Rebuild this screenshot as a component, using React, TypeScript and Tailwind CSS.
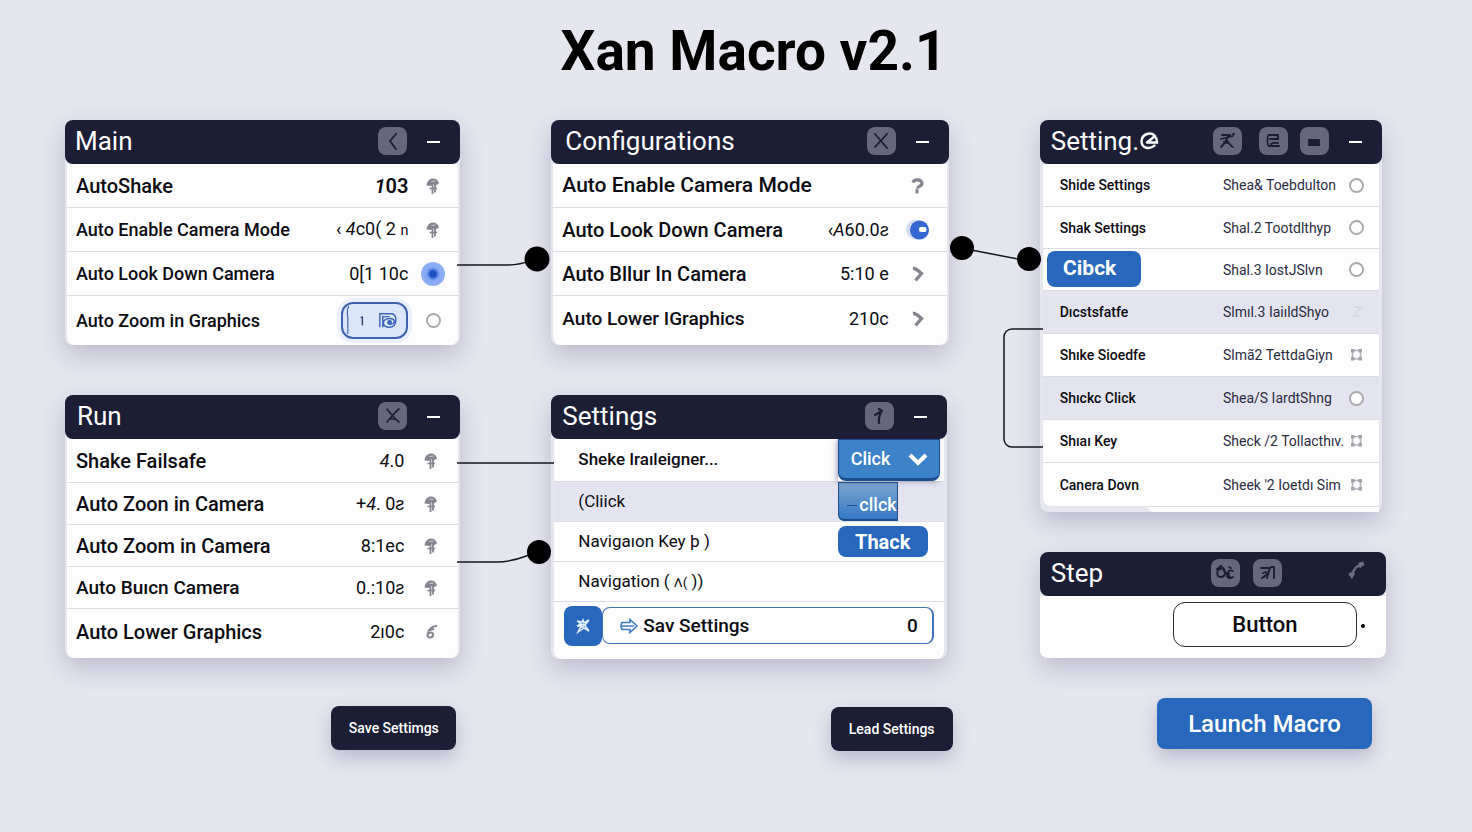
import React from 'react';
import clsx from 'clsx';

type IconName = 'mushroom' | 'hook' | 'question' | 'chevron' | 'square' | 'radio' | 'radioOn' | 'toggle' | 'faint';

interface RowData {
  label: string;
  value?: React.ReactNode;
  icon: IconName;
  size: string;
  height: string;
}

interface ShakeRow {
  label: string;
  value: string;
  icon: IconName;
  height: string;
  button?: boolean;
  shaded?: boolean;
}

const mainRows: RowData[] = [
  { label: 'AutoShake', value: <b className="text-xl font-semibold"><i>1</i>03</b>, icon: 'mushroom', size: 'text-[20px]', height: 'h-[44px]' },
  { label: 'Auto Enable Camera Mode', value: <>‹ <i>4</i>c0( 2 <small>n</small></>, icon: 'mushroom', size: 'text-lg', height: 'h-[44px]' },
  { label: 'Auto Look Down Camera', value: '0[1 10c', icon: 'radioOn', size: 'text-lg', height: 'h-[44px]' },
  { label: 'Auto Zoom in Graphics', value: <ZoomButton />, icon: 'radio', size: 'text-lg', height: 'h-[49px]' },
];

const configRows: RowData[] = [
  { label: 'Auto Enable Camera Mode', icon: 'question', size: 'text-[21px]', height: 'h-[44px]' },
  { label: 'Auto Look Down Camera', value: <>‹<i>A</i>60.0ƨ</>, icon: 'toggle', size: 'text-[20px]', height: 'h-[44px]' },
  { label: 'Auto Bllur In Camera', value: '5:10 e', icon: 'chevron', size: 'text-[20px]', height: 'h-[44px]' },
  { label: 'Auto Lower IGraphics', value: '210c', icon: 'chevron', size: 'text-[19px]', height: 'h-[49px] pb-1' },
];

const runRows: RowData[] = [
  { label: 'Shake Failsafe', value: <><i>4</i>.0</>, icon: 'mushroom', size: 'text-[20px]', height: 'h-[44px]' },
  { label: 'Auto Zoon in Camera', value: <>+<i>4</i>. 0ƨ</>, icon: 'mushroom', size: 'text-[20px]', height: 'h-[42px]' },
  { label: 'Auto Zoom in Camera', value: '8:1ec', icon: 'mushroom', size: 'text-[20px]', height: 'h-[42px]' },
  { label: 'Auto Buıcn Camera', value: '0.:10ƨ', icon: 'mushroom', size: 'text-[19px]', height: 'h-[42px]' },
  { label: 'Auto Lower Graphics', value: '2ı0c', icon: 'hook', size: 'text-[20px]', height: 'h-[49px] pb-1' },
];

const shakeRows: ShakeRow[] = [
  { label: 'Shide Settings', value: 'Shea& Toebdulton', icon: 'radio', height: 'h-[43px]' },
  { label: 'Shak Settings', value: 'Shal.2 Tootdlthyp', icon: 'radio', height: 'h-[42px]' },
  { label: 'Cibck', value: 'Shal.3 IostJSlvn', icon: 'radio', height: 'h-[42px]', button: true },
  { label: 'Dıcstsfatfe', value: 'Slmıl.3 IaiıldShyo', icon: 'faint', height: 'h-[43px]', shaded: true },
  { label: 'Shıke Sioedfe', value: 'Slmã2 TettdaGiyn', icon: 'square', height: 'h-[43px]' },
  { label: 'Shıckc Click', value: 'Shea/S IardtShng', icon: 'radio', height: 'h-[43px]', shaded: true },
  { label: 'Shıaı Key', value: 'Sheck /2 Tollacthıv.', icon: 'square', height: 'h-[43px]' },
  { label: 'Canera Dovn', value: "Sheek '2 Ioetdı Sim", icon: 'square', height: 'h-[43px]' },
];

function RowIcon({ name, label }: { name: IconName; label: string }) {
  if (name === 'radio') {
    return <input type="radio" aria-label={label} className="size-[15px] appearance-none rounded-full border-2 border-[#a9a9ad] bg-white" />;
  }
  if (name === 'radioOn') {
    return (
      <input
        type="radio"
        aria-label={label}
        defaultChecked
        className="size-6 appearance-none rounded-full bg-[radial-gradient(circle,#1d4fc4_0_3px,#5f8ae8_5px,#86a9f3_7px,#8fb0f5_12px)]"
      />
    );
  }
  if (name === 'toggle') {
    return (
      <svg viewBox="0 0 24 24" className="size-6">
        <circle cx="10" cy="11.500" r="10" fill="#d3dcf0" />
        <circle cx="13.500" cy="12" r="9.500" fill="#3468d0" />
        <rect x="13" y="9" width="7.500" height="5" rx="2" fill="#fff" />
      </svg>
    );
  }
  return (
    <svg viewBox="0 0 20 20" className="size-5" fill="none" stroke="#85858f" strokeWidth="2.600">
      {name === 'mushroom' && (
        <>
          <path d="M3.500 9.500C4 5 7 2.500 10 2.500s5 1.500 6 5l-3.500 2-2-1.500-2.500 2z" fill="#85858f" stroke="none" />
          <path d="M9.500 7.500V18M12 6.500v10" strokeWidth="1.800" />
          <path d="M6.500 12.500h7.500" strokeWidth="1.600" />
          <path d="M8.500 5.500l4-.5" stroke="#c9c9d0" strokeWidth="1.200" />
        </>
      )}
      {name === 'hook' && <path d="M16 4c-5-.5-9 4-9.500 9 0 4 5 3 5.500 0s-3-3-5-1M7 8.500l6-1.500" strokeWidth="2" />}
      {name === 'question' && (
        <>
          <path d="M5 6.500C6 3 13 3 14 7c.5 3-4 3-4.500 5.500" strokeWidth="3.200" />
          <path d="M7.500 12.500l3 1v4h-3z" fill="#85858f" stroke="none" />
        </>
      )}
      {name === 'chevron' && <path d="M5 4.500c3-.5 5 2 8.500 5L7.500 16.500" strokeWidth="3.400" />}
      {name === 'square' && (
        <>
          <path d="M5.500 5.500h8v8.500h-8z" stroke="#b4b4ba" strokeWidth="1.600" />
          <path d="M4 4h3.500v3.500H4zM11.500 4H15v3.500h-3.500zM4 12h3.500v3.500H4zM11.500 12H15v3.500h-3.500z" fill="#a2a2aa" stroke="none" />
        </>
      )}
      {name === 'faint' && <path d="M7 5h7l-7 9h6" stroke="#d9d9e3" strokeWidth="2" />}
    </svg>
  );
}

function ZoomButton() {
  return (
    <button
      aria-label="Zoom"
      className="flex h-[37px] w-[67px] items-center justify-center rounded-xl border-2 border-[#3d62b0] bg-[#dbe6fb] shadow-[0_0_0_4px_#eaf0fc]"
    >
      <svg viewBox="0 0 60 34" className="h-[33px] w-[60px]" fill="none" stroke="#3d66b8" strokeWidth="1.500">
        <path d="M3 2c-2 4-2 7-1 11v18" strokeWidth="1.200" />
        <path d="M17 13v9M15.500 14.500L17 13" stroke="#34466f" />
        <path d="M35 24V10h13c5 2 5 14-3 14-9 0-8-9 0-9 7 0 6 6 0 6M38 24V13h7" />
        <circle cx="45" cy="19" r="1.800" fill="#3d66b8" />
      </svg>
    </button>
  );
}

function Tile({ label, children }: { label: string; children: React.ReactNode }) {
  return (
    <button aria-label={label} className="mb-0.5 flex h-[28px] w-[29px] items-center justify-center rounded-lg bg-[#66667f]">
      <svg viewBox="0 0 24 24" className="size-6" fill="none" stroke="#1b1d33" strokeWidth="1.800" strokeLinecap="round">
        {children}
      </svg>
    </button>
  );
}

function Minimize() {
  return (
    <button aria-label="Minimize" className="flex h-6 items-center">
      <span className="h-0.5 w-[13px] bg-white" />
    </button>
  );
}

function CardHeader({ title, className, children }: { title: React.ReactNode; className?: string; children: React.ReactNode }) {
  return (
    <header className={clsx('flex h-[44px] items-center rounded-lg bg-[#1c1e36] pr-5', className)}>
      <h2 className="flex-1 whitespace-nowrap pb-0.5 text-[26px] leading-none text-white">{title}</h2>
      {children}
    </header>
  );
}

function Rows({ rows, slot }: { rows: RowData[]; slot: string }) {
  return (
    <ul className="mx-[2px] divide-y divide-[#dcdce4] rounded-b-lg bg-[#fdfdfe]">
      {rows.map((row) => (
        <li key={row.label} className={clsx('flex items-center pl-[9px]', row.height)}>
          <span className={clsx('flex-1 whitespace-nowrap font-medium leading-none', row.size)}>{row.label}</span>
          <span className="whitespace-nowrap text-lg leading-none">{row.value}</span>
          <span className={clsx('flex justify-center', slot)}>
            <RowIcon name={row.icon} label={row.label} />
          </span>
        </li>
      ))}
    </ul>
  );
}

function Card({ className, children }: { className?: string; children: React.ReactNode }) {
  return (
    <section className={clsx('rounded-lg shadow-[0_10px_24px_rgba(50,50,100,0.24)]', className)}>{children}</section>
  );
}

function SettingsCard() {
  return (
    <Card className="mr-0.5">
      <CardHeader title="Settings" className="h-[43px] pl-[11px]">
        <Tile label="Up">
          <path d="M8 11l7-4M14 7c-1 5-3 6-2 12M12 5l3 2" strokeWidth="2.200" />
        </Tile>
        <span className="w-5" />
        <Minimize />
      </CardHeader>
      <div className="mx-[3px] rounded-b-lg bg-[#fdfdfe]">
        <div className="flex h-[43px] items-start justify-between border-b border-[#dcdce4] pl-6 pr-1">
          <label htmlFor="shake-mode" className="self-center whitespace-nowrap text-[17px] font-medium">Sheke Iraıleigner...</label>
          <div className="relative shadow-[-2px_1px_5px_rgba(50,50,100,0.35)]">
            <select
              id="shake-mode"
              className="h-[42px] w-[102px] appearance-none rounded-b-lg border border-b-3 border-[#1b4f8c] bg-[#3b82c8] pl-3 text-lg font-medium text-white"
            >
              <option>Click</option>
            </select>
            <svg viewBox="0 0 20 14" className="pointer-events-none absolute right-3 top-3.5 h-3.5 w-5" fill="none" stroke="#fff" strokeWidth="4">
              <path d="M2 2l8 8 8-8" />
            </svg>
          </div>
        </div>
        <div className="flex h-[40px] items-center justify-between border-b border-[#dcdce4] bg-[#e3e4ef] pl-6 pr-[46px]">
          <span className="text-[17px]">(Cliick</span>
          <button className="flex h-[39px] w-[60px] items-center justify-end rounded-bl-md border border-b-2 border-[#1b4f8c] bg-linear-to-b from-[#7ba4cf] to-[#3379c4] pt-2 text-lg font-medium leading-none text-white">
            <span className="mr-0.5 h-px w-2.5 bg-[#1b4f8c]" />
            cllck
          </button>
        </div>
        <div className="flex h-[40px] items-center justify-between border-b border-[#dcdce4] pl-6 pr-4">
          <span className="text-[17px]">Navigaıon Key þ )</span>
          <button className="h-[31px] w-[90px] rounded-lg bg-[#2768bd] text-xl font-bold leading-none text-white">Thack</button>
        </div>
        <div className="flex h-[40px] items-center border-b border-[#dcdce4] pl-6">
          <span className="text-[17px]">
            Navigation ( <small>Λ(</small> ))
          </span>
        </div>
        <div className="flex h-[57px] items-start px-2.5 pt-1">
          <button aria-label="Person" className="flex h-[40px] w-[38px] items-center justify-center rounded-lg bg-[#2768bd]">
            <svg viewBox="0 0 16 16" className="size-4" fill="none" stroke="#e4f2ff" strokeWidth="1.500">
              <path d="M2 3l5 1 1-2 1 3 5-3-4 5 1 2 3 4-5-3-6 4 3-6-4 0 4-2-4-3M6 6l4 1-3 2z" />
            </svg>
          </button>
          <button className="mt-px flex h-[37px] flex-1 items-center rounded-lg border border-r-2 border-[#3f74b8] pl-4 pr-3.5 text-[19px] font-medium leading-none">
            <svg viewBox="0 0 20 16" className="mr-1 h-4 w-5" fill="none" stroke="#3f7cc4" strokeWidth="1.600">
              <path d="M3 4.500h8V1.500l7 6.500-7 6.500v-3H3q-2-3.500 0-7zM3 8h12" />
            </svg>
            <span>Sav Settings</span>
            <span className="ml-auto">0</span>
          </button>
        </div>
      </div>
    </Card>
  );
}

function EMark() {
  return (
    <svg viewBox="0 0 20 20" className="size-5" fill="none" stroke="#fff" strokeWidth="2.400" strokeLinecap="round">
      <path d="M8 11.500l8-6.500C12 0 3 3 2.500 10c0 8 9 8.500 13 4.500M8 11.500h10c0-2 0-3-1-4.500" />
    </svg>
  );
}

function ShakeCard() {
  return (
    <div className="relative mr-1">
      <svg viewBox="0 0 40 122" className="absolute -left-[37px] top-[208px] h-[122px] w-10" fill="none" stroke="#16161f" strokeWidth="1.500">
        <path d="M40 1H9a8 8 0 0 0-8 8v102a8 8 0 0 0 8 8h31" />
      </svg>
      <Card>
        <CardHeader title={<span className="flex items-center">Setting.<EMark /></span>} className="pl-[11px]">
          <Tile label="Tools">
            <path d="M7 6h8M6 10l12-3M13 7c-1 5-4 8-7 11M11 11c3 2 4 6 7 7M18 5h1M9 13l3 1" />
          </Tile>
          <span className="w-[17px]" />
          <Tile label="Edit">
            <path d="M17 6H8c-2 0-2 11 0 11h10M17 6v4H9M10 15c3-2 4-1 7-1" />
          </Tile>
          <span className="w-[12px]" />
          <Tile label="Window">
            <path d="M7 11h10v5H7z" fill="#1b1d33" />
          </Tile>
          <span className="w-5" />
          <Minimize />
        </CardHeader>
        <ul className="mx-[3px] rounded-bl-lg bg-[#fdfdfe] text-sm font-medium leading-none">
          {shakeRows.map((row) => (
            <li
              key={row.label}
              className={clsx('flex items-center border-b border-[#dcdce4] last:border-b-0', row.height, row.shaded && 'bg-[#e3e4ef]', row.button ? 'pl-1' : 'pl-[17px]')}
            >
              <span className="flex-1 whitespace-nowrap">
                {row.button ? (
                  <button className="mb-0.5 h-[36px] w-[94px] rounded-lg bg-[#2768bd] pr-2 text-[21px] font-bold leading-none text-white">{row.label}</button>
                ) : (
                  row.label
                )}
              </span>
              <span className="w-[112px] whitespace-nowrap font-normal text-[#2a2c40]">{row.value}</span>
              <span className="flex w-[44px] justify-center">
                <RowIcon name={row.icon} label={row.label} />
              </span>
            </li>
          ))}
        </ul>
        <div className="ml-[108px] mr-[3px] h-1.5 rounded-bl-lg border-t border-[#dcdce4] bg-[#fdfdfe]" />
      </Card>
    </div>
  );
}

function StepCard() {
  return (
    <Card>
      <CardHeader title="Step" className="pl-[11px]">
        <Tile label="Link">
          <path d="M8 8c-5 0-5 8 0 8s5-6 2-8M4 8l4-3 3 3M11 10l7 7M20 10c-4-2-6 1-4 3M20 16c-3 2-6 1-6-1M16 6l2 1" />
        </Tile>
        <span className="w-[13px]" />
        <Tile label="Open">
          <path d="M6 7h9c-1 5-4 8-8 10M8 12l3-1M14 10l-2 7M16 6h3v11" />
        </Tile>
        <svg viewBox="0 0 20 20" className="mb-2 ml-16 size-5" fill="none" stroke="#6b6c84" strokeWidth="2.400">
          <path d="M6 14c2-3 2-6 6-8l6-2" />
          <path d="M2 14l5-3 2 3-3 5zM12 3l5-1.500 1 3-4 4z" fill="#6b6c84" stroke="none" />
        </svg>
      </CardHeader>
      <div className="flex h-[62px] items-start justify-end gap-1 rounded-b-lg bg-[#fdfdfe] pr-[21px] pt-1.5">
        <button className="h-[45px] w-[184px] rounded-xl border border-[#2a2a33] text-[22px] font-medium leading-none">Button</button>
        <span className="mt-[22px] size-1 rounded-full bg-black" />
      </div>
    </Card>
  );
}

export default function App() {
  return (
    <main className="min-h-screen bg-[#e6e6ef] pl-[65px] pr-[86px] pt-[21px] pb-20 font-['Roboto','Liberation_Sans',sans-serif] text-[#0c0c12]">
      <h1 className="pl-14 text-center text-[55px] font-bold leading-[60px] text-black">Xan Macro v2.1</h1>
      <div className="grid grid-cols-[395fr_397fr_346fr] gap-x-[91px] pt-[39px]">
        <div className="relative flex flex-col">
          <svg viewBox="0 0 100 320" className="absolute -right-[97px] top-[125px] h-[320px] w-[100px]" fill="none" stroke="#16161f" strokeWidth="1.500">
            <path d="M0 20h52c12 0 18-3 26-6M0 218h100M0 317h40c20 0 28-7 42-10" />
            <circle cx="80" cy="14" r="12.500" fill="#000" stroke="none" />
            <circle cx="82" cy="307" r="12" fill="#000" stroke="none" />
          </svg>
          <Card>
            <CardHeader title="Main" className="pl-2.5">
              <Tile label="Back">
                <path d="M15 5l-6 7 6 8" />
              </Tile>
              <span className="w-5" />
              <Minimize />
            </CardHeader>
            <Rows rows={mainRows} slot="w-[50px]" />
          </Card>
          <Card className="mt-[50px]">
            <CardHeader title="Run" className="h-[43px] pl-3">
              <Tile label="Close">
                <path d="M6 5c3 3 6 9 12 13M18 5C14 8 11 12 6 18M10 15h4" strokeWidth="1.600" />
              </Tile>
              <span className="w-5" />
              <Minimize />
            </CardHeader>
            <Rows rows={runRows} slot="w-[54px]" />
          </Card>
          <button className="mr-1 mt-12 h-[44px] w-[125px] self-end rounded-lg bg-[#1c1e36] text-sm font-medium text-white shadow-[0_8px_18px_rgba(50,50,100,0.25)]">
            Save Settimgs
          </button>
        </div>
        <div className="relative flex flex-col">
          <svg viewBox="0 0 96 40" className="absolute -right-[94px] top-[115px] h-10 w-24" fill="none" stroke="#16161f" strokeWidth="1.500">
            <path d="M14 13l67 13" />
            <circle cx="15" cy="13" r="12" fill="#000" stroke="none" />
            <circle cx="82" cy="24" r="12" fill="#000" stroke="none" />
          </svg>
          <Card>
            <CardHeader title="Configurations" className="pl-3.5">
              <Tile label="Close">
                <path d="M6 5l12 14M18 5L6 18" />
              </Tile>
              <span className="w-5" />
              <Minimize />
            </CardHeader>
            <Rows rows={configRows} slot="w-[58px]" />
          </Card>
          <div className="mt-[50px]">
            <SettingsCard />
          </div>
          <button className="-mr-1 mt-12 h-[44px] w-[122px] self-end rounded-lg bg-[#1c1e36] text-sm font-medium text-white shadow-[0_8px_18px_rgba(50,50,100,0.25)]">
            Lead Settings
          </button>
        </div>
        <div className="flex flex-col gap-10">
          <ShakeCard />
          <StepCard />
          <button className="mr-3.5 h-[51px] w-[215px] self-end rounded-lg bg-[#2768bd] text-2xl font-medium leading-none text-white shadow-[0_8px_18px_rgba(50,50,100,0.25)]">
            Launch Macro
          </button>
        </div>
      </div>
    </main>
  );
}
